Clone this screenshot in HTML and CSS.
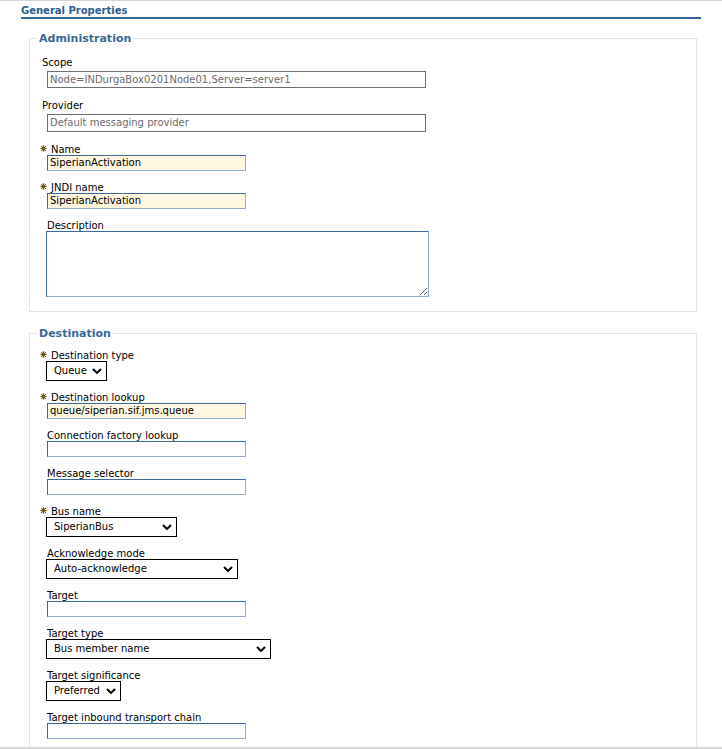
FILE: index.html
```html
<!DOCTYPE html>
<html>
<head>
<meta charset="utf-8">
<title>General Properties</title>
<link rel="stylesheet" href="styles.css">
</head>
<body>
<div class="frame">
  <h2 class="section-title">General Properties</h2>

  <fieldset class="group group-admin">
    <legend>Administration</legend>

    <div class="field field-ro">
      <label class="lbl">Scope</label>
      <input class="txt txt-ro" type="text" readonly value="Node=INDurgaBox0201Node01,Server=server1">
    </div>

    <div class="field field-ro">
      <label class="lbl">Provider</label>
      <input class="txt txt-ro" type="text" readonly value="Default messaging provider">
    </div>

    <div class="field">
      <div class="lbl-row">
        <svg class="req" width="7" height="7" viewBox="0 0 7 7"><path d="M3.5 0.3V6.7M0.3 3.5H6.7M1.2 1.2L5.8 5.8M5.8 1.2L1.2 5.8"/></svg>
        <label class="lbl">Name</label>
      </div>
      <input class="txt txt-req" type="text" value="SiperianActivation">
    </div>

    <div class="field">
      <div class="lbl-row">
        <svg class="req" width="7" height="7" viewBox="0 0 7 7"><path d="M3.5 0.3V6.7M0.3 3.5H6.7M1.2 1.2L5.8 5.8M5.8 1.2L1.2 5.8"/></svg>
        <label class="lbl">JNDI name</label>
      </div>
      <input class="txt txt-req" type="text" value="SiperianActivation">
    </div>

    <div class="field field-last">
      <label class="lbl lbl-plain">Description</label>
      <textarea class="area"></textarea>
    </div>
  </fieldset>

  <fieldset class="group group-dest">
    <legend>Destination</legend>

    <div class="field">
      <div class="lbl-row">
        <svg class="req" width="7" height="7" viewBox="0 0 7 7"><path d="M3.5 0.3V6.7M0.3 3.5H6.7M1.2 1.2L5.8 5.8M5.8 1.2L1.2 5.8"/></svg>
        <label class="lbl">Destination type</label>
      </div>
      <span class="sel-wrap sel-w-queue">
        <select class="sel"><option>Queue</option></select>
        <svg class="chev" width="10" height="6" viewBox="0 0 10 6"><path d="M1 1L5 5L9 1"/></svg>
      </span>
    </div>

    <div class="field">
      <div class="lbl-row">
        <svg class="req" width="7" height="7" viewBox="0 0 7 7"><path d="M3.5 0.3V6.7M0.3 3.5H6.7M1.2 1.2L5.8 5.8M5.8 1.2L1.2 5.8"/></svg>
        <label class="lbl">Destination lookup</label>
      </div>
      <input class="txt txt-req" type="text" value="queue/siperian.sif.jms.queue">
    </div>

    <div class="field">
      <label class="lbl lbl-plain">Connection factory lookup</label>
      <input class="txt txt-opt" type="text" value="">
    </div>

    <div class="field">
      <label class="lbl lbl-plain">Message selector</label>
      <input class="txt txt-opt" type="text" value="">
    </div>

    <div class="field">
      <div class="lbl-row">
        <svg class="req" width="7" height="7" viewBox="0 0 7 7"><path d="M3.5 0.3V6.7M0.3 3.5H6.7M1.2 1.2L5.8 5.8M5.8 1.2L1.2 5.8"/></svg>
        <label class="lbl">Bus name</label>
      </div>
      <span class="sel-wrap sel-w-bus">
        <select class="sel"><option>SiperianBus</option></select>
        <svg class="chev" width="10" height="6" viewBox="0 0 10 6"><path d="M1 1L5 5L9 1"/></svg>
      </span>
    </div>

    <div class="field">
      <label class="lbl lbl-plain">Acknowledge mode</label>
      <span class="sel-wrap sel-w-ack">
        <select class="sel"><option>Auto-acknowledge</option></select>
        <svg class="chev" width="10" height="6" viewBox="0 0 10 6"><path d="M1 1L5 5L9 1"/></svg>
      </span>
    </div>

    <div class="field">
      <label class="lbl lbl-plain">Target</label>
      <input class="txt txt-opt" type="text" value="">
    </div>

    <div class="field">
      <label class="lbl lbl-plain">Target type</label>
      <span class="sel-wrap sel-w-type">
        <select class="sel"><option>Bus member name</option></select>
        <svg class="chev" width="10" height="6" viewBox="0 0 10 6"><path d="M1 1L5 5L9 1"/></svg>
      </span>
    </div>

    <div class="field">
      <label class="lbl lbl-plain">Target significance</label>
      <span class="sel-wrap sel-w-sig">
        <select class="sel"><option>Preferred</option></select>
        <svg class="chev" width="10" height="6" viewBox="0 0 10 6"><path d="M1 1L5 5L9 1"/></svg>
      </span>
    </div>

    <div class="field">
      <label class="lbl lbl-plain">Target inbound transport chain</label>
      <input class="txt txt-opt" type="text" value="">
    </div>
  </fieldset>
</div>
</body>
</html>
```

FILE: styles.css
```css
html, body {
  margin: 0;
  padding: 0;
  background: #ffffff;
}

body {
  font-family: "DejaVu Sans", Verdana, sans-serif;
  font-size: 10px;
  color: #000000;
}

.frame {
  height: 749px;
  box-sizing: border-box;
  border-top: 1px solid #d6d6d6;
  border-bottom: 2px solid #d6d6d6;
  overflow: hidden;
  padding: 4px 21px 0 21px;
}

.section-title {
  margin: 0;
  width: 680px;
  font-size: 10px;
  line-height: 12px;
  font-weight: bold;
  color: #2d5d8e;
  border-bottom: 2px solid #336699;
}

.group {
  margin: 13px 4px 0 8px;
  border: 1px solid #e4e4e4;
  padding: 11.5px 10px 14px 10px;
  min-inline-size: 0;
}

.group-dest {
  margin-top: 15px;
  padding-top: 10px;
}

.group legend {
  font-size: 11px;
  line-height: 13px;
  font-weight: bold;
  color: #3a6897;
  padding: 0 2px;
  margin-left: -3px;
}

.field {
  display: flex;
  flex-direction: column;
  align-items: flex-start;
  margin-bottom: 11px;
}

.field-ro {
  margin-bottom: 12px;
}

.field-last {
  margin-bottom: 0;
}

.lbl-row {
  display: flex;
  align-items: flex-start;
}

.lbl {
  display: block;
  font-size: 10px;
  line-height: 11px;
  color: #000000;
}

.field-ro .lbl {
  margin-left: 2px;
}

.lbl-row .lbl {
  margin-left: 4px;
}

.lbl-plain {
  margin-left: 7px;
}

.req {
  display: block;
  margin-top: 1.5px;
  fill: none;
  stroke: #6b5c12;
  stroke-width: 1.1;
}

.txt {
  display: block;
  box-sizing: border-box;
  margin: 0 0 0 7px;
  font-family: "DejaVu Sans", Verdana, sans-serif;
  font-size: 10px;
  color: #000000;
  padding: 0 2px;
  outline: none;
  border-radius: 0;
}

.txt-ro {
  width: 379px;
  height: 17.5px;
  margin-top: 3px;
  border: 1px solid #6e6e6e;
  color: #6b6b6b;
  background: #ffffff;
}

.txt-req,
.txt-opt {
  width: 199px;
  height: 16px;
  border-style: solid;
  border-width: 1px;
  border-color: #3c6b9b #8fb1d1 #8fb1d1 #3c6b9b;
}

.txt-req {
  background: #fff7df;
}

.txt-opt {
  background: #ffffff;
}

.area {
  display: block;
  box-sizing: border-box;
  width: 383px;
  height: 66px;
  margin: 0 0 0 6px;
  border-style: solid;
  border-width: 1px;
  border-color: #3c6b9b #8fb1d1 #8fb1d1 #3c6b9b;
  border-radius: 0;
  font-family: "DejaVu Sans", Verdana, sans-serif;
  font-size: 10px;
  outline: none;
}

.sel-wrap {
  position: relative;
  display: block;
  margin-left: 6px;
}

.sel {
  display: block;
  box-sizing: border-box;
  width: 100%;
  height: 20px;
  -webkit-appearance: none;
  appearance: none;
  border: 1px solid #000000;
  border-radius: 0;
  background: #ffffff;
  font-family: "DejaVu Sans", Verdana, sans-serif;
  font-size: 10px;
  color: #000000;
  padding: 0 0 0 7px;
  margin: 0;
  outline: none;
}

.chev {
  position: absolute;
  right: 5px;
  top: 7px;
  fill: none;
  stroke: #000000;
  stroke-width: 2;
  pointer-events: none;
}

.sel-w-queue { width: 61px; }
.sel-w-bus { width: 131px; }
.sel-w-ack { width: 192px; }
.sel-w-type { width: 225px; }
.sel-w-sig { width: 75px; }
```
